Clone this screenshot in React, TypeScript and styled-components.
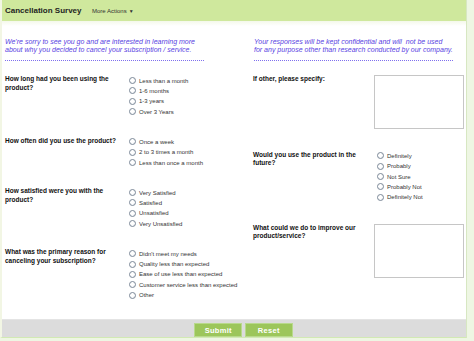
import { createGlobalStyle, styled } from 'styled-components';

const GlobalStyle = createGlobalStyle`
  html, body {
    margin: 0;
    padding: 0;
  }
  body {
    background: #eef6e3;
    font-family: 'Liberation Sans', Arial, sans-serif;
    color: #222;
  }
`;

const Panel = styled.div`
  width: 464px;
  background: #fff;
  border-left: 2px solid #f2f6e4;
  border-right: 1px solid #d7e7c2;
  border-bottom: 1px solid #d2e9b4;
`;

const Header = styled.div`
  height: 21px;
  display: flex;
  align-items: center;
  padding-left: 3px;
  background: #cfe89d;
`;

const Title = styled.div`
  font-size: 8px;
  font-weight: 700;
  color: #1e1e1e;
`;

const MoreActions = styled.div`
  margin-left: 10.5px;
  font-size: 6px;
  color: #333;
  display: flex;
  align-items: center;
  gap: 2px;

  span {
    font-size: 5px;
  }
`;

const Body = styled.div`
  display: grid;
  grid-template-columns: 240px 211px;
  column-gap: 8px;
  padding: 17px 2px 18.6px 3px;
  background: linear-gradient(#f4f8ea 0, #fff 5px);
`;

const Column = styled.div`
  display: flex;
  flex-direction: column;
`;

const Intro = styled.div<{ $indent?: number }>`
  width: 199px;
  margin-left: ${(props) => props.$indent ?? 0}px;
  margin-bottom: 14.4px;
  padding-bottom: 5.2px;
  border-bottom: 1px dotted #7f70ee;
  font-size: 7px;
  font-style: italic;
  line-height: 8.4px;
  color: #5842e2;
`;

const IntroLine = styled.span`
  display: block;
  white-space: pre;
`;

const QuestionList = styled.div<{ $gap: number }>`
  display: flex;
  flex-direction: column;
  gap: ${(props) => props.$gap}px;
`;

const QuestionRow = styled.div`
  display: grid;
  grid-template-columns: 121px 1fr;
  align-items: start;
`;

const QuestionLabel = styled.div`
  padding-right: 4px;
  font-size: 6.5px;
  font-weight: 700;
  line-height: 8.4px;
  color: #111;
`;

const OptionList = styled.div`
  display: flex;
  flex-direction: column;
  padding-left: 3px;
`;

const Option = styled.label`
  display: flex;
  align-items: center;
  gap: 3px;
  height: 10.4px;
  font-size: 6px;
  color: #333;
  white-space: nowrap;
`;

const Radio = styled.input`
  appearance: none;
  box-sizing: border-box;
  width: 7px;
  height: 7px;
  margin: 0;
  border: 1px solid #7b8897;
  border-radius: 50%;
  background: radial-gradient(circle at 40% 35%, #fff 40%, #e6ebf0 100%);
`;

const TextBox = styled.textarea`
  display: block;
  box-sizing: border-box;
  width: 90px;
  height: 54px;
  margin: 0;
  border: 1px solid #c6c6c6;
  resize: none;
  background: #fff;
`;

const Footer = styled.div`
  height: 18px;
  box-sizing: border-box;
  display: flex;
  justify-content: center;
  gap: 2.5px;
  padding: 3.3px 0 0 19px;
  background: #dcdcdc;
  border-top: 1px solid #e4e4e4;
`;

const Button = styled.button`
  width: 48px;
  height: 13.5px;
  padding: 0;
  box-sizing: border-box;
  background: #9cc65b;
  border: 1px solid #b8d98c;
  color: #fff;
  font-family: 'Liberation Sans', Arial, sans-serif;
  font-size: 7.5px;
  font-weight: 700;
  letter-spacing: 0.3px;
`;

type Question = {
  name: string;
  label: string;
  options?: string[];
};

const leftQuestions: Question[] = [
  {
    name: 'duration',
    label: 'How long had you been using the product?',
    options: ['Less than a month', '1-6 months', '1-3 years', 'Over 3 Years'],
  },
  {
    name: 'frequency',
    label: 'How often did you use the product?',
    options: ['Once a week', '2 to 3 times a month', 'Less than once a month'],
  },
  {
    name: 'satisfaction',
    label: 'How satisfied were you with the product?',
    options: ['Very Satisfied', 'Satisfied', 'Unsatisfied', 'Very Unsatisfied'],
  },
  {
    name: 'reason',
    label: 'What was the primary reason for canceling your subscription?',
    options: [
      "Didn't meet my needs",
      'Quality less than expected',
      'Ease of use less than expected',
      'Customer service less than expected',
      'Other',
    ],
  },
];

const rightQuestions: Question[] = [
  { name: 'other', label: 'If other, please specify:' },
  {
    name: 'future',
    label: 'Would you use the product in the future?',
    options: ['Definitely', 'Probably', 'Not Sure', 'Probably Not', 'Definitely Not'],
  },
  { name: 'improve', label: 'What could we do to improve our product/service?' },
];

const leftIntro = [
  "We're sorry to see you go and are interested in learning more",
  'about why you decided to cancel your subscription / service.',
];

const rightIntro = [
  'Your responses will be kept confidential and will  not be used',
  'for any purpose other than research conducted by our company.',
];

function QuestionBlock({ question }: { question: Question }) {
  return (
    <QuestionRow>
      <QuestionLabel>{question.label}</QuestionLabel>
      {question.options ? (
        <OptionList>
          {question.options.map((option) => (
            <Option key={option}>
              <Radio type="radio" name={question.name} />
              {option}
            </Option>
          ))}
        </OptionList>
      ) : (
        <TextBox name={question.name} />
      )}
    </QuestionRow>
  );
}

export default function App() {
  return (
    <>
      <GlobalStyle />
      <Panel>
        <Header>
          <Title>Cancellation Survey</Title>
          <MoreActions>
            More Actions <span>▼</span>
          </MoreActions>
        </Header>
        <Body>
          <Column>
            <Intro>
              {leftIntro.map((line) => (
                <IntroLine key={line}>{line}</IntroLine>
              ))}
            </Intro>
            <QuestionList $gap={19.6}>
              {leftQuestions.map((q) => (
                <QuestionBlock key={q.name} question={q} />
              ))}
            </QuestionList>
          </Column>
          <Column>
            <Intro $indent={1}>
              {rightIntro.map((line) => (
                <IntroLine key={line}>{line}</IntroLine>
              ))}
            </Intro>
            <QuestionList $gap={21.2}>
              {rightQuestions.map((q) => (
                <QuestionBlock key={q.name} question={q} />
              ))}
            </QuestionList>
          </Column>
        </Body>
        <Footer>
          <Button type="button">Submit</Button>
          <Button type="button">Reset</Button>
        </Footer>
      </Panel>
    </>
  );
}
